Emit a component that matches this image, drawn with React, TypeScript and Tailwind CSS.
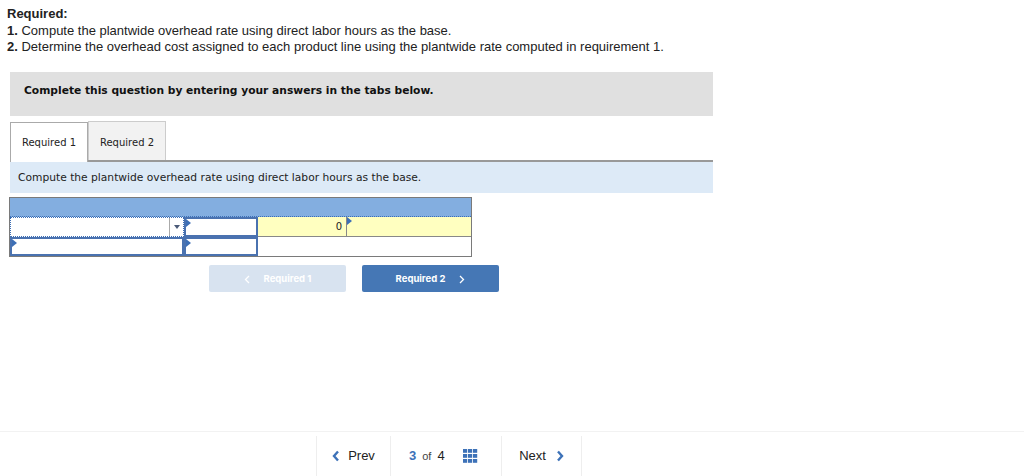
import React from 'react';

const Marker = () => (
    <span className="absolute left-0 top-0 w-0 h-0 border-t-[4px] border-b-[4px] border-l-[5px] border-t-transparent border-b-transparent border-l-[#3d6fb6]" />
);

const App: React.FC = () => {
    return (
        <div className="w-[1024px] h-[476px] bg-white relative overflow-hidden" style={{ fontFamily: '"Liberation Sans", Arial, sans-serif' }}>
            <div className="pl-[7px] pt-[6px] text-[13px] leading-[16.5px] text-[#222]">
                <p className="font-bold">Required:</p>
                <p><span className="font-bold">1.</span> Compute the plantwide overhead rate using direct labor hours as the base.</p>
                <p><span className="font-bold">2.</span> Determine the overhead cost assigned to each product line using the plantwide rate computed in requirement 1.</p>
            </div>

            <div className="ml-[10px] w-[703px] mt-[16px]" style={{ fontFamily: '"DejaVu Sans", Verdana, sans-serif' }}>
                <div className="h-[44px] bg-[#e0e0e0] flex items-start pt-[11px] pl-[14px] text-[10.7px] font-bold text-[#111]">
                    Complete this question by entering your answers in the tabs below.
                </div>

                <div className="mt-[6px] flex items-end h-[40px] border-b-2 border-[#999]">
                    <div className="w-[78px] h-[40px] -mb-[2px] bg-white border border-b-0 border-[#aaa] flex items-center justify-center text-[10px] text-[#222]">
                        Required 1
                    </div>
                    <div className="w-[78px] h-[39px] pt-[3px] bg-[#f2f2f2] border border-b-0 border-[#ccc] flex items-center justify-center text-[10px] text-[#222]">
                        Required 2
                    </div>
                </div>

                <div className="h-[31px] pt-[3px] bg-[#ddeaf7] flex items-center pl-[8px] text-[10.7px] text-[#222]">
                    Compute the plantwide overhead rate using direct labor hours as the base.
                </div>
            </div>

            <div className="ml-[9px] mt-[4px] w-[463px] border border-[#7a7a7a] bg-white" style={{ fontFamily: '"DejaVu Sans", Verdana, sans-serif' }}>
                <div className="h-[19px] bg-[#83aee0] border-b border-dotted border-[#3d6fb6]" />
                <div className="flex h-[20px]">
                    <div className="relative w-[174px] border border-dotted border-[#3d6fb6] bg-white flex">
                        <div className="flex-1" />
                        <div className="w-[14px] border-l border-[#aaa] flex items-center justify-center">
                            <span className="w-0 h-0 border-l-[3px] border-r-[3px] border-t-[4px] border-l-transparent border-r-transparent border-t-[#4a5a78]" />
                        </div>
                    </div>
                    <div className="relative w-[74px] border-2 border-[#4a72b0] bg-white"><Marker /></div>
                    <div className="w-[88px] bg-[#ffffc0] border-b border-[#888] flex items-center justify-end pr-[4px] text-[10px] text-[#222]">0</div>
                    <div className="relative flex-1 bg-[#ffffc0] border-l border-b border-[#888]"><Marker /></div>
                </div>
                <div className="flex h-[19px]">
                    <div className="relative w-[174px] border-2 border-[#4a72b0] bg-white"><Marker /></div>
                    <div className="relative w-[74px] border-2 border-[#4a72b0] bg-white"><Marker /></div>
                    <div className="flex-1 bg-white" />
                </div>
            </div>

            <div className="mt-[8px] ml-[209px] flex gap-[16px]">
                <button className="w-[137px] h-[27px] pt-[2px] rounded-[2px] bg-[#d8e3f0] text-white text-[9.5px] font-bold flex items-center justify-center gap-[14px]" style={{ fontFamily: 'Inter, "Open Sans", sans-serif' }}>
                    <svg width="6" height="9" viewBox="0 0 6 9"><path d="M5 1L1.5 4.5L5 8" stroke="white" strokeWidth="1.3" fill="none" /></svg>
                    Required 1
                </button>
                <button className="w-[137px] h-[27px] pt-[2px] rounded-[2px] bg-[#4577b5] text-white text-[9.5px] font-bold flex items-center justify-center gap-[14px]" style={{ fontFamily: 'Inter, "Open Sans", sans-serif' }}>
                    Required 2
                    <svg width="6" height="9" viewBox="0 0 6 9"><path d="M1 1L4.5 4.5L1 8" stroke="white" strokeWidth="1.3" fill="none" /></svg>
                </button>
            </div>

            <div className="absolute left-0 right-0 top-[431px] h-[45px] border-t border-[#f2f2f2] flex">
                <div className="ml-[316px] flex h-full pt-[4px]">
                    <div className="w-[75px] border-l border-r border-[#eee] flex items-center justify-center gap-[8px] text-[13px] text-[#222]">
                        <svg width="8" height="12" viewBox="0 0 8 12"><path d="M6 1.5L2 6L6 10.5" stroke="#3d72b8" strokeWidth="2.4" fill="none" /></svg>
                        Prev
                    </div>
                    <div className="w-[111px] border-r border-[#eee] flex items-center pl-[18px] text-[13px]">
                        <span className="font-bold text-[#3d72b8]">3</span>
                        <span className="ml-[6px] text-[11px] text-[#444]">of</span>
                        <span className="ml-[6px] text-[#222]">4</span>
                        <svg className="ml-[18px]" width="15" height="14" viewBox="0 0 15 14">
                            {[0, 5, 10].map((x) => [0, 5, 10].map((y) => (
                                <rect key={`${x}-${y}`} x={x} y={y} width="4.2" height="3.8" fill="#3d72b8" />
                            )))}
                        </svg>
                    </div>
                    <div className="w-[80px] border-r border-[#eee] flex items-center justify-center gap-[10px] text-[13px] text-[#222]">
                        Next
                        <svg width="8" height="12" viewBox="0 0 8 12"><path d="M2 1.5L6 6L2 10.5" stroke="#3d72b8" strokeWidth="2.4" fill="none" /></svg>
                    </div>
                </div>
            </div>
        </div>
    );
};

export default App;
